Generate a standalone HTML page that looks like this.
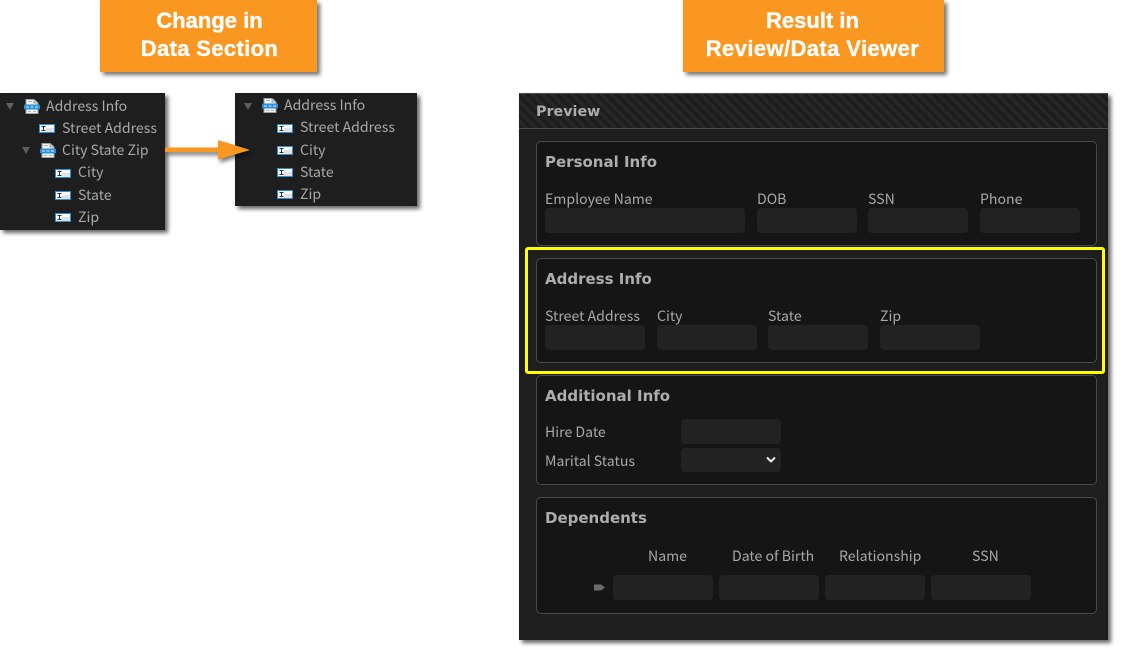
<!DOCTYPE html>
<html lang="en"><head><meta charset="utf-8"><title>Change in Data Section</title>
<style>
html,body{margin:0;padding:0;background:#fff}
body{position:relative;width:1121px;height:653px;overflow:hidden;font-family:"Noto Sans CJK JP","DejaVu Sans",sans-serif}
div,svg{position:absolute;box-sizing:border-box}
.call{background:#f99720;box-shadow:3px 3px 4px rgba(0,0,0,.55);color:#fff;font:bold 22px/28px "Liberation Sans",sans-serif;text-align:center;padding-top:7px;-webkit-text-stroke:.35px #fff}
.tree{background:#1e1e1e;box-shadow:3px 3px 4px rgba(0,0,0,.6)}
.t{white-space:nowrap;font-size:14.1px;line-height:22px;color:#a8a8a8}
.h{white-space:nowrap;font-family:"DejaVu Sans",sans-serif;font-weight:bold;font-size:15px;line-height:22px;color:#adadad}
.panel{left:519px;top:93px;width:589px;height:547px;background:#1e1e1e;border-top:1px solid #4c4c4c;box-shadow:3px 3px 4px rgba(0,0,0,.6)}
.bar{left:519px;top:94px;width:589px;height:35px;border-bottom:1px solid #4c4c4c;background:repeating-linear-gradient(45deg,#1d1d1d 0,#1d1d1d 3.5px,#262626 3.5px,#262626 7px)}
.g{left:536px;width:561px;background:#151515;border:1px solid #4a4a4a;border-radius:5px}
.i{background:#222;border-radius:4px;height:25px}
.y{left:525px;top:247px;width:580px;height:127px;border:3px solid #ffff00;border-radius:3px}
</style></head><body>

<svg width="0" height="0" style="left:0;top:0">
<defs>
<symbol id="tb" viewBox="0 0 16 9"><rect x=".5" y=".5" width="15" height="8" fill="#f8fafb" stroke="#2a8fd6"/><rect x="7" y="4" width="8" height="4" fill="#dfe3e6"/><path d="M2.500 2.500h4M4.500 2.500v4M2.500 6.500h4" stroke="#333" fill="none"/></symbol>
<symbol id="fm" viewBox="0 0 16 15"><path d="M2 .5h8l4 3.500v10.500H2z" fill="#f1f3f5" stroke="#9aa2a8"/><path d="M10 .5v3.500h4" fill="#cfd4d8" stroke="#9aa2a8"/><rect x="0" y="5.500" width="16" height="5" rx="1" fill="#2a8fd6"/><path d="M2 8h3M6.500 8h3M11 8h3" stroke="#dff0fb"/><path d="M4 12.500h3M9 12.500h3M4 2.500h4" stroke="#aab0b5"/></symbol>
</defs></svg>

<div class="call" style="left:100px;top:0;width:217px;height:72px"><span style="position:relative;left:1px">Change in</span><br><span style="letter-spacing:.35px;position:relative;left:1px">Data Section</span></div>
<div class="call" style="left:683px;top:0;width:261px;height:72px"><span style="position:relative;left:-1px">Result in</span><br><span style="letter-spacing:.4px;position:relative;left:-1px">Review/Data Viewer</span></div>

<!-- left tree -->
<div class="tree" style="left:0;top:93px;width:165px;height:137px"></div>
<svg style="left:6px;top:102px" width="8" height="8"><path d="M0 1h8L4 8z" fill="#5e5e5e"/></svg>
<svg style="left:24px;top:99px" width="16" height="15"><use href="#fm"/></svg>
<div class="t" style="left:46px;top:95px">Address Info</div>
<svg style="left:39px;top:124px" width="16" height="9"><use href="#tb"/></svg>
<div class="t" style="left:62px;top:117px">Street Address</div>
<svg style="left:22px;top:146px" width="8" height="8"><path d="M0 1h8L4 8z" fill="#5e5e5e"/></svg>
<svg style="left:40px;top:143px" width="16" height="15"><use href="#fm"/></svg>
<div class="t" style="left:62px;top:139px">City State Zip</div>
<svg style="left:55px;top:169px" width="16" height="9"><use href="#tb"/></svg>
<div class="t" style="left:78px;top:161px">City</div>
<svg style="left:55px;top:191px" width="16" height="9"><use href="#tb"/></svg>
<div class="t" style="left:78px;top:184px">State</div>
<svg style="left:55px;top:213px" width="16" height="9"><use href="#tb"/></svg>
<div class="t" style="left:78px;top:206px">Zip</div>

<!-- right tree -->
<div class="tree" style="left:235px;top:93px;width:182px;height:113px"></div>
<svg style="left:244px;top:102px" width="8" height="8"><path d="M0 1h8L4 8z" fill="#5e5e5e"/></svg>
<svg style="left:262px;top:98px" width="16" height="15"><use href="#fm"/></svg>
<div class="t" style="left:284px;top:94px">Address Info</div>
<svg style="left:277px;top:124px" width="16" height="9"><use href="#tb"/></svg>
<div class="t" style="left:300px;top:116px">Street Address</div>
<svg style="left:277px;top:146px" width="16" height="9"><use href="#tb"/></svg>
<div class="t" style="left:300px;top:139px">City</div>
<svg style="left:277px;top:168px" width="16" height="9"><use href="#tb"/></svg>
<div class="t" style="left:300px;top:161px">State</div>
<svg style="left:277px;top:190px" width="16" height="9"><use href="#tb"/></svg>
<div class="t" style="left:300px;top:183px">Zip</div>

<!-- arrow -->
<svg style="left:165px;top:135px;filter:drop-shadow(2px 3px 2px rgba(0,0,0,.55))" width="90" height="30"><path d="M0 12.500h53V5L85 15 53 24.500V17H0z" fill="#f99720"/></svg>

<!-- preview panel -->
<div class="panel"></div>
<div class="bar"></div>
<div class="h" style="left:536px;top:101px;font-size:14.300px">Preview</div>

<div class="g" style="top:141px;height:105px"></div>
<div class="h" style="left:545px;top:151px">Personal Info</div>
<div class="t" style="left:545px;top:188px">Employee Name</div>
<div class="t" style="left:757px;top:188px">DOB</div>
<div class="t" style="left:868px;top:188px">SSN</div>
<div class="t" style="left:980px;top:188px">Phone</div>
<div class="i" style="left:545px;top:208px;width:200px"></div>
<div class="i" style="left:757px;top:208px;width:100px"></div>
<div class="i" style="left:868px;top:208px;width:100px"></div>
<div class="i" style="left:980px;top:208px;width:100px"></div>

<div class="g" style="top:258px;height:105px"></div>
<div class="h" style="left:545px;top:268px">Address Info</div>
<div class="t" style="left:545px;top:305px">Street Address</div>
<div class="t" style="left:657px;top:305px">City</div>
<div class="t" style="left:768px;top:305px">State</div>
<div class="t" style="left:880px;top:305px">Zip</div>
<div class="i" style="left:545px;top:325px;width:100px"></div>
<div class="i" style="left:657px;top:325px;width:100px"></div>
<div class="i" style="left:768px;top:325px;width:100px"></div>
<div class="i" style="left:880px;top:325px;width:100px"></div>
<div class="y"></div>

<div class="g" style="top:375px;height:110px"></div>
<div class="h" style="left:545px;top:385px">Additional Info</div>
<div class="t" style="left:545px;top:421px">Hire Date</div>
<div class="i" style="left:681px;top:419px;width:100px"></div>
<div class="t" style="left:545px;top:450px">Marital Status</div>
<div class="i" style="left:681px;top:448px;width:100px;height:24px"></div>
<svg style="left:765px;top:456px" width="12" height="8"><path d="M2 1.500l4 4 4-4" fill="none" stroke="#e8e8e8" stroke-width="2"/></svg>

<div class="g" style="top:497px;height:117px"></div>
<div class="h" style="left:545px;top:507px">Dependents</div>
<div class="t" style="left:648px;top:545px">Name</div>
<div class="t" style="left:732px;top:545px">Date of Birth</div>
<div class="t" style="left:839px;top:545px">Relationship</div>
<div class="t" style="left:972px;top:545px">SSN</div>
<svg style="left:594px;top:584px" width="11" height="7"><path d="M0 .5h7l4 3-4 3H0z" fill="#6a6a6a"/></svg>
<div class="i" style="left:613px;top:575px;width:100px"></div>
<div class="i" style="left:719px;top:575px;width:100px"></div>
<div class="i" style="left:825px;top:575px;width:100px"></div>
<div class="i" style="left:931px;top:575px;width:100px"></div>
</body></html>
